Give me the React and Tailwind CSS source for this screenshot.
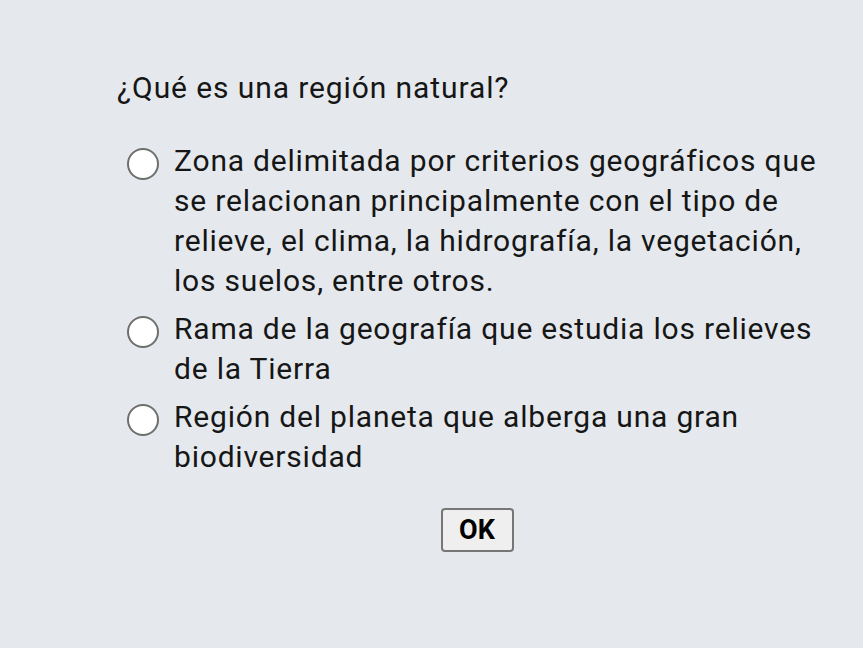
import { useState } from "react";

const OPTIONS = [
  "Zona delimitada por criterios geográficos que se relacionan principalmente con el tipo de relieve, el clima, la hidrografía, la vegetación, los suelos, entre otros.",
  "Rama de la geografía que estudia los relieves de la Tierra",
  "Región del planeta que alberga una gran biodiversidad",
];

export default function App() {
  const [selected, setSelected] = useState(null);

  return (
    <div className="min-h-[648px] w-full bg-[#e5e9ed] font-['Roboto',sans-serif] text-[#161616]">
      <div className="w-[720px] pl-[117px] pt-[68px] box-content">
        <p className="text-[30px] leading-[40px] tracking-[0.9px]">¿Qué es una región natural?</p>

        <div className="mt-[33px] flex flex-col gap-2 pl-[10px]">
          {OPTIONS.map((text, i) => (
            <label key={i} className="flex cursor-pointer items-start gap-[15px]">
              <input
                type="radio"
                name="answer"
                checked={selected === i}
                onChange={() => setSelected(i)}
                className="sr-only"
              />
              <span className="mt-[7px] flex h-[32px] w-[32px] shrink-0 items-center justify-center rounded-full border-2 border-[#6e6e6e] bg-white">
                {selected === i ? <span className="h-[16px] w-[16px] rounded-full bg-[#1a73e8]" /> : null}
              </span>
              <span className="text-[30px] leading-[40px] tracking-[0.8px]">{text}</span>
            </label>
          ))}
        </div>

        <div className="mt-[31px] flex justify-center">
          <button
            type="button"
            className="h-[44px] w-[73px] rounded-[4px] border-2 border-[#767676] bg-[#efefef] text-[27px] font-bold text-black"
          >
            OK
          </button>
        </div>
      </div>
    </div>
  );
}
